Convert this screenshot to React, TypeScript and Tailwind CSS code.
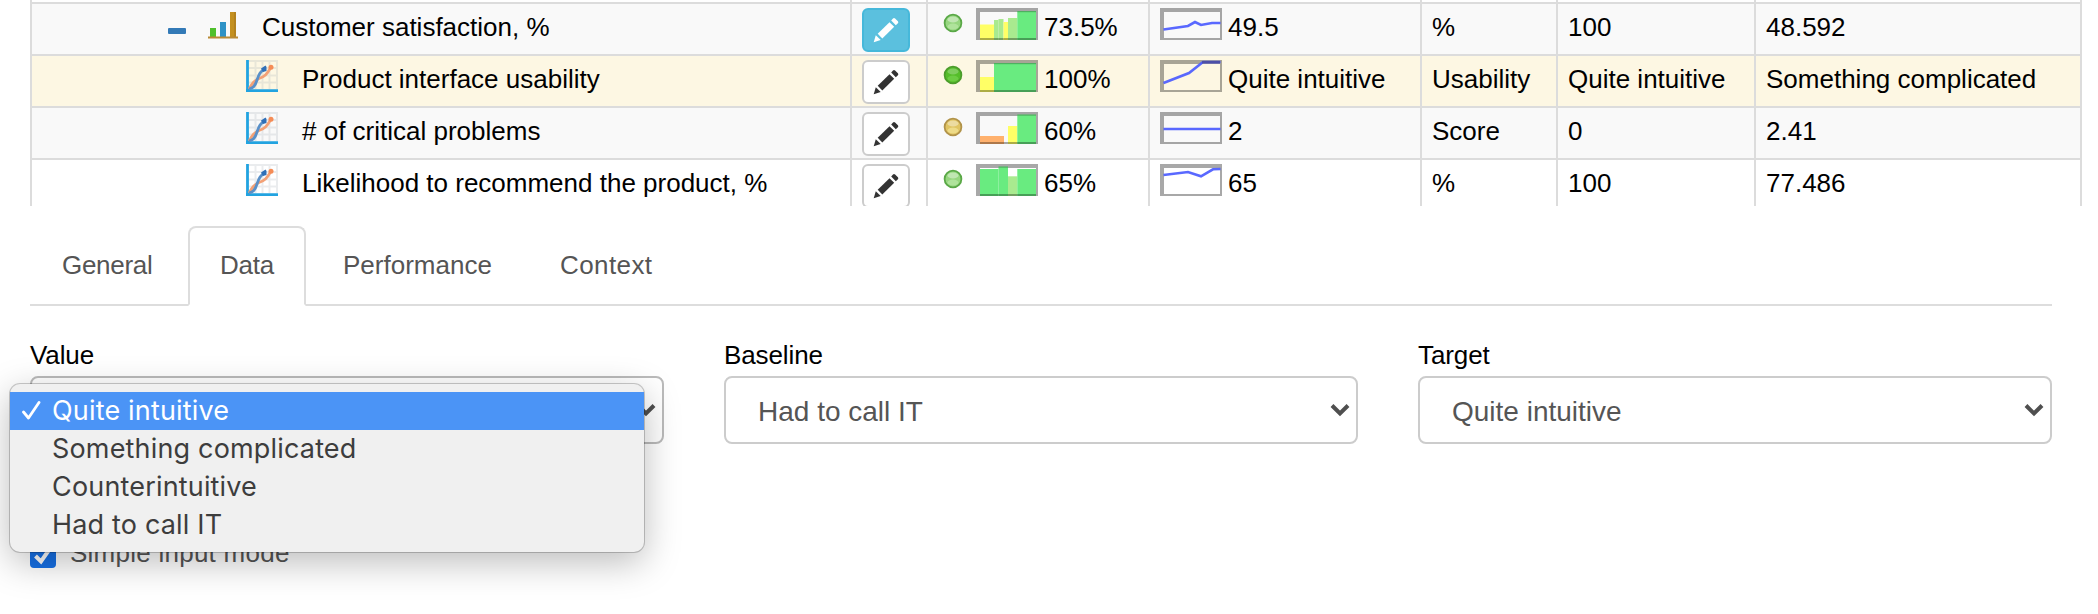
import type { ReactNode } from "react";

type Bar = [x: number, y: number, w: number, color: string];

const GREEN = "#69eb80";
const LIME = "#a9ea8f";
const YELLOW = "#ffff66";
const ORANGE = "#ffb16d";

interface Row {
  name: string;
  parent?: boolean;
  background: string;
  ink: string;
  dot: "light" | "full" | "amber";
  bars: Bar[];
  progress: string;
  line: string;
  value: string;
  measure: string;
  target: string;
  baseline: string;
}

const rows: Row[] = [
  {
    name: "Customer satisfaction, %",
    parent: true,
    background: "bg-[#f9f9f9]",
    ink: "#a5a5a5",
    dot: "light",
    bars: [[4, 16.5, 14, YELLOW], [18, 12, 4.5, LIME], [22.5, 11, 5, LIME], [27.5, 14, 4.5, YELLOW], [32, 10, 9.3, LIME], [41.3, 3, 18.7, GREEN]],
    progress: "73.5%",
    line: "3.5,21.5 28,18 35,14 41,17 52,15 60.5,15",
    value: "49.5",
    measure: "%",
    target: "100",
    baseline: "48.592",
  },
  {
    name: "Product interface usability",
    background: "bg-[#fdf7e3]",
    ink: "#a8a496",
    dot: "full",
    bars: [[4, 17, 14, YELLOW], [18, 3, 42, GREEN]],
    progress: "100%",
    line: "3.5,23 29,13 43,2 60.5,2",
    value: "Quite intuitive",
    measure: "Usability",
    target: "Quite intuitive",
    baseline: "Something complicated",
  },
  {
    name: "# of critical problems",
    background: "bg-[#f9f9f9]",
    ink: "#a5a5a5",
    dot: "amber",
    bars: [[4, 24, 24, ORANGE], [32, 14, 9.3, YELLOW], [41.3, 2.5, 18.7, GREEN]],
    progress: "60%",
    line: "3.5,17 60.5,17",
    value: "2",
    measure: "Score",
    target: "0",
    baseline: "2.41",
  },
  {
    name: "Likelihood to recommend the product, %",
    background: "bg-white",
    ink: "#a8a8a8",
    dot: "light",
    bars: [[4, 5, 18.5, GREEN], [22.5, 2.5, 9.5, GREEN], [32, 12.3, 9.3, LIME], [41.3, 5, 18.7, GREEN]],
    progress: "65%",
    line: "3.5,11 28,8 41,12.3 53,5.3 60.5,5",
    value: "65",
    measure: "%",
    target: "100",
    baseline: "77.486",
  },
];

const COLS = "grid grid-cols-[820px_76px_222px_272px_136px_198px_328px]";

function Cell({ children, className = "" }: { children?: ReactNode; className?: string }) {
  return <div className={`flex items-start border-l-2 border-[#dcdcdc] ${className}`}>{children}</div>;
}

function Label({ children }: { children: ReactNode }) {
  return <span className="pt-[5px] leading-9 whitespace-nowrap">{children}</span>;
}

function BarsIcon() {
  return (
    <svg width="30" height="27" viewBox="0 0 30 27" className="mt-2 ml-[22px] shrink-0">
      <rect x="2" y="16" width="6" height="9" fill="#4fc02c" />
      <rect x="12" y="10" width="6" height="15" fill="#2e92c6" />
      <rect x="22" y="0" width="6" height="25" fill="#c4901f" />
      <rect x="26" y="0" width="2" height="25" fill="#b3821f" />
      <rect x="0" y="24.500" width="30" height="2" fill="#b98a35" />
    </svg>
  );
}

function CurveIcon() {
  return (
    <svg width="32" height="32" viewBox="0 0 32 32" className="mt-1 ml-[214px] shrink-0">
      <path d="M3 1H32M3 8H32M3 15.500H32M3 22.500H32M9.500 0V29M16.500 0V29M23.500 0V29M31 0V29" stroke="#a8b0b8" strokeOpacity=".24" strokeWidth="2" fill="none" />
      <path d="M1.500 0V32M0 30.700H32" stroke="#22a3e0" strokeWidth="2.800" fill="none" />
      <path d="M3 29C6 24 8 20.500 13 18.500C19 16.500 21 14 24.500 8" stroke="#f3a176" strokeWidth="2.800" fill="none" />
      <path d="M3 29C7 28 9 26.500 11 20C13 14 14 12.500 18 9" stroke="#5a90c8" strokeWidth="2.800" fill="none" />
      <circle cx="25" cy="7.200" r="2.500" fill="#f58c56" />
      <path d="M15 8.500L19.500 5.500L20.500 7V11L17 12Z" fill="#2f6fb7" />
    </svg>
  );
}

function Pencil() {
  return (
    <svg width="48" height="44" viewBox="0 0 48 44" fill="currentColor" className="-m-0.5">
      <path d="M11.700 34.200L13.800 27.300L18.700 32Z" />
      <path d="M15.700 25.800L27.500 14.200L32.200 18.800L20.300 30.500Z" />
      <path d="M29.200 12.600L31 10.500Q32 9.400 33.100 10.500L35.900 13.200Q36.800 14.200 35.900 15.200L33.800 17.200Z" />
    </svg>
  );
}

const dots = {
  light: { rim: "#5aa847", mid: "#96d67f", glow: "#c4efb2" },
  full: { rim: "#4c9c2c", mid: "#55bd2a", glow: "#7fd957" },
  amber: { rim: "#b1934a", mid: "#e0c463", glow: "#faeea8" },
};

function Dot({ kind }: { kind: Row["dot"] }) {
  const c = dots[kind];
  return (
    <svg width="20" height="20" viewBox="0 0 20 20" className="mt-[9px] ml-[15px] shrink-0">
      <circle cx="10" cy="10" r="8.400" fill={c.mid} stroke={c.rim} strokeWidth="1.800" />
      <ellipse cx="10" cy="13.500" rx="5.500" ry="3" fill={c.glow} opacity=".55" />
      <ellipse cx="10" cy="6.500" rx="5.500" ry="3" fill="#fff" opacity={kind === "full" ? 0.25 : 0.4} />
    </svg>
  );
}

function Frame({ ink, children }: { ink: string; children: ReactNode }) {
  return (
    <svg width="62" height="32" viewBox="0 0 62 32" className="mt-1 shrink-0">
      <path d="M0 0H62V32H0ZM4 4V30H60V4Z" fillRule="evenodd" fill={ink} />
      {children}
    </svg>
  );
}

function Table() {
  return (
    <div className="ml-[30px] h-[206px] w-[2052px] overflow-hidden text-[26px] text-black">
      <div className={`${COLS} h-0.5 border-r-2 border-[#dcdcdc]`}>
        {[0, 1, 2, 3, 4, 5, 6].map((i) => <Cell key={i} />)}
      </div>
      {rows.map((r) => (
        <div key={r.name} className={`${COLS} h-[52px] border-t-2 border-r-2 border-[#dcdcdc] ${r.background}`}>
          <Cell>
            {r.parent ? (
              <>
                <span className="mt-6 ml-[136px] h-1.5 w-[18px] rounded-[1px] bg-[#337ab7]" />
                <BarsIcon />
              </>
            ) : (
              <CurveIcon />
            )}
            <span className="w-6 shrink-0" />
            <Label>{r.name}</Label>
          </Cell>
          <Cell>
            <button
              className={`mt-1 ml-2.5 h-11 w-12 rounded-md border-2 ${
                r.parent ? "border-[#46b8da] bg-[#5bc0de] text-white" : "border-[#cccccc] bg-white text-[#333333]"
              }`}
            >
              <Pencil />
            </button>
          </Cell>
          <Cell>
            <Dot kind={r.dot} />
            <span className="w-[13px] shrink-0" />
            <Frame ink={r.ink}>
              {r.bars.map(([x, y, w, color]) => (
                <rect key={x} x={x} y={y} width={w} height={31 - y} fill={color} />
              ))}
              {r.bars.map(([x, y, w, color]) => (
                <g key={x}>
                  <rect x={x} y="30" width={w} height="2" fill={color} />
                  <rect x={x} y="30" width={w} height="2" fill="#000" opacity=".32" />
                  {y < 4 && <rect x={x} y={y} width={w} height="1.200" fill="#000" opacity=".25" />}
                </g>
              ))}
            </Frame>
            <span className="w-1.5 shrink-0" />
            <Label>{r.progress}</Label>
          </Cell>
          <Cell className="pl-2.5">
            <Frame ink={r.ink}>
              <polyline points={r.line} fill="none" stroke="#4758ff" strokeOpacity=".9" strokeWidth="2.600" />
              {r.line.endsWith(",2") && <rect x="42" y="1" width="18" height="2.500" fill="#4c4fa8" />}
            </Frame>
            <span className="w-1.5 shrink-0" />
            <Label>{r.value}</Label>
          </Cell>
          <Cell className="pl-2.5"><Label>{r.measure}</Label></Cell>
          <Cell className="pl-2.5"><Label>{r.target}</Label></Cell>
          <Cell className="pl-2.5"><Label>{r.baseline}</Label></Cell>
        </div>
      ))}
    </div>
  );
}

const tabs = [
  { name: "General", width: "w-[154px]", spacing: "tracking-[-0.3px]" },
  { name: "Data", width: "w-[118px]", spacing: "tracking-[-0.2px]" },
  { name: "Performance", width: "w-[214px] indent-px", spacing: "tracking-[0px]" },
  { name: "Context", width: "w-[156px]", spacing: "tracking-[0.4px]" },
];

function Tabs() {
  return (
    <div className="mt-5 ml-[30px] flex h-20 w-[2022px] gap-1 border-b-2 border-[#dddddd] text-[26px] text-[#555555]">
      {tabs.map((t) => (
        <div
          key={t.name}
          className={`h-20 shrink-0 rounded-t-lg border-2 pt-[19px] pl-[30px] leading-9 ${t.width} ${t.spacing} ${
            t.name === "Data" ? "border-[#dddddd] border-b-white bg-white" : "border-transparent"
          }`}
        >
          {t.name}
        </div>
      ))}
    </div>
  );
}

function Select({ label, value, children }: { label: string; value?: string; children?: ReactNode }) {
  return (
    <div className="relative w-[634px]">
      <div className="h-[39px] text-[26px] leading-9 tracking-[-0.1px] text-black">{label}</div>
      <div
        className={`flex h-[68px] items-center justify-between rounded-lg border-2 bg-white pr-[5px] pl-8 text-[28px] text-[#555555] ${
          children ? "border-[#bbbbbb]" : "border-[#cccccc]"
        }`}
      >
        <span className="pt-1 leading-9">{value}</span>
        <svg width="22" height="16" viewBox="0 0 22 16" className="mb-px">
          <path d="M3 3.500L11 11.500L19 3.500" fill="none" stroke="#4f4f4f" strokeWidth="4" />
        </svg>
      </div>
      {children}
    </div>
  );
}

const options = ["Quite intuitive", "Something complicated", "Counterintuitive", "Had to call IT"];

function Menu() {
  return (
    <div className="absolute top-[47px] left-[-20px] z-10 h-[168px] w-[634px] rounded-[10px] bg-[#f0f0f0] pt-2 font-[Inter,sans-serif] text-[27px] tracking-[0.17px] text-[#3d3d3d] shadow-[0_0_0_1px_rgba(0,0,0,0.2),0_10px_36px_rgba(0,0,0,0.27)]">
      {options.map((o, i) => (
        <div key={o} className={`flex h-[38px] items-center ${i === 0 ? "bg-[#4b94f6] text-white" : ""}`}>
          <span className="flex w-[42px] shrink-0 pl-[11px]">
            {i === 0 && (
              <svg width="20" height="20" viewBox="0 0 20 20">
                <path d="M2.500 11L7.500 17L18 1.500" fill="none" stroke="#fff" strokeWidth="2.800" strokeLinecap="round" strokeLinejoin="round" />
              </svg>
            )}
          </span>
          <span className="leading-9">{o}</span>
        </div>
      ))}
    </div>
  );
}

export default function App() {
  return (
    <div className="h-[614px] w-[2098px] overflow-hidden bg-white font-['Liberation_Sans',Arial,sans-serif]">
      <Table />
      <Tabs />
      <div className="mt-[31px] ml-[30px] flex gap-[60px]">
        <Select label="Value">
          <Menu />
        </Select>
        <Select label="Baseline" value="Had to call IT" />
        <Select label="Target" value="Quite intuitive" />
      </div>
      <div className="mt-[91px] ml-[30px] flex h-9 items-start text-[26px] text-[#555555]">
        <span className="mt-[7px] flex h-[26px] w-[26px] rounded bg-[#1670e6]">
          <svg width="26" height="26" viewBox="0 0 26 26">
            <path d="M5.500 14L11 19.500L20 6.500" fill="none" stroke="#fff" strokeWidth="4" />
          </svg>
        </span>
        <span className="ml-[14px] leading-9 tracking-[0.25px]">Simple input mode</span>
      </div>
    </div>
  );
}
